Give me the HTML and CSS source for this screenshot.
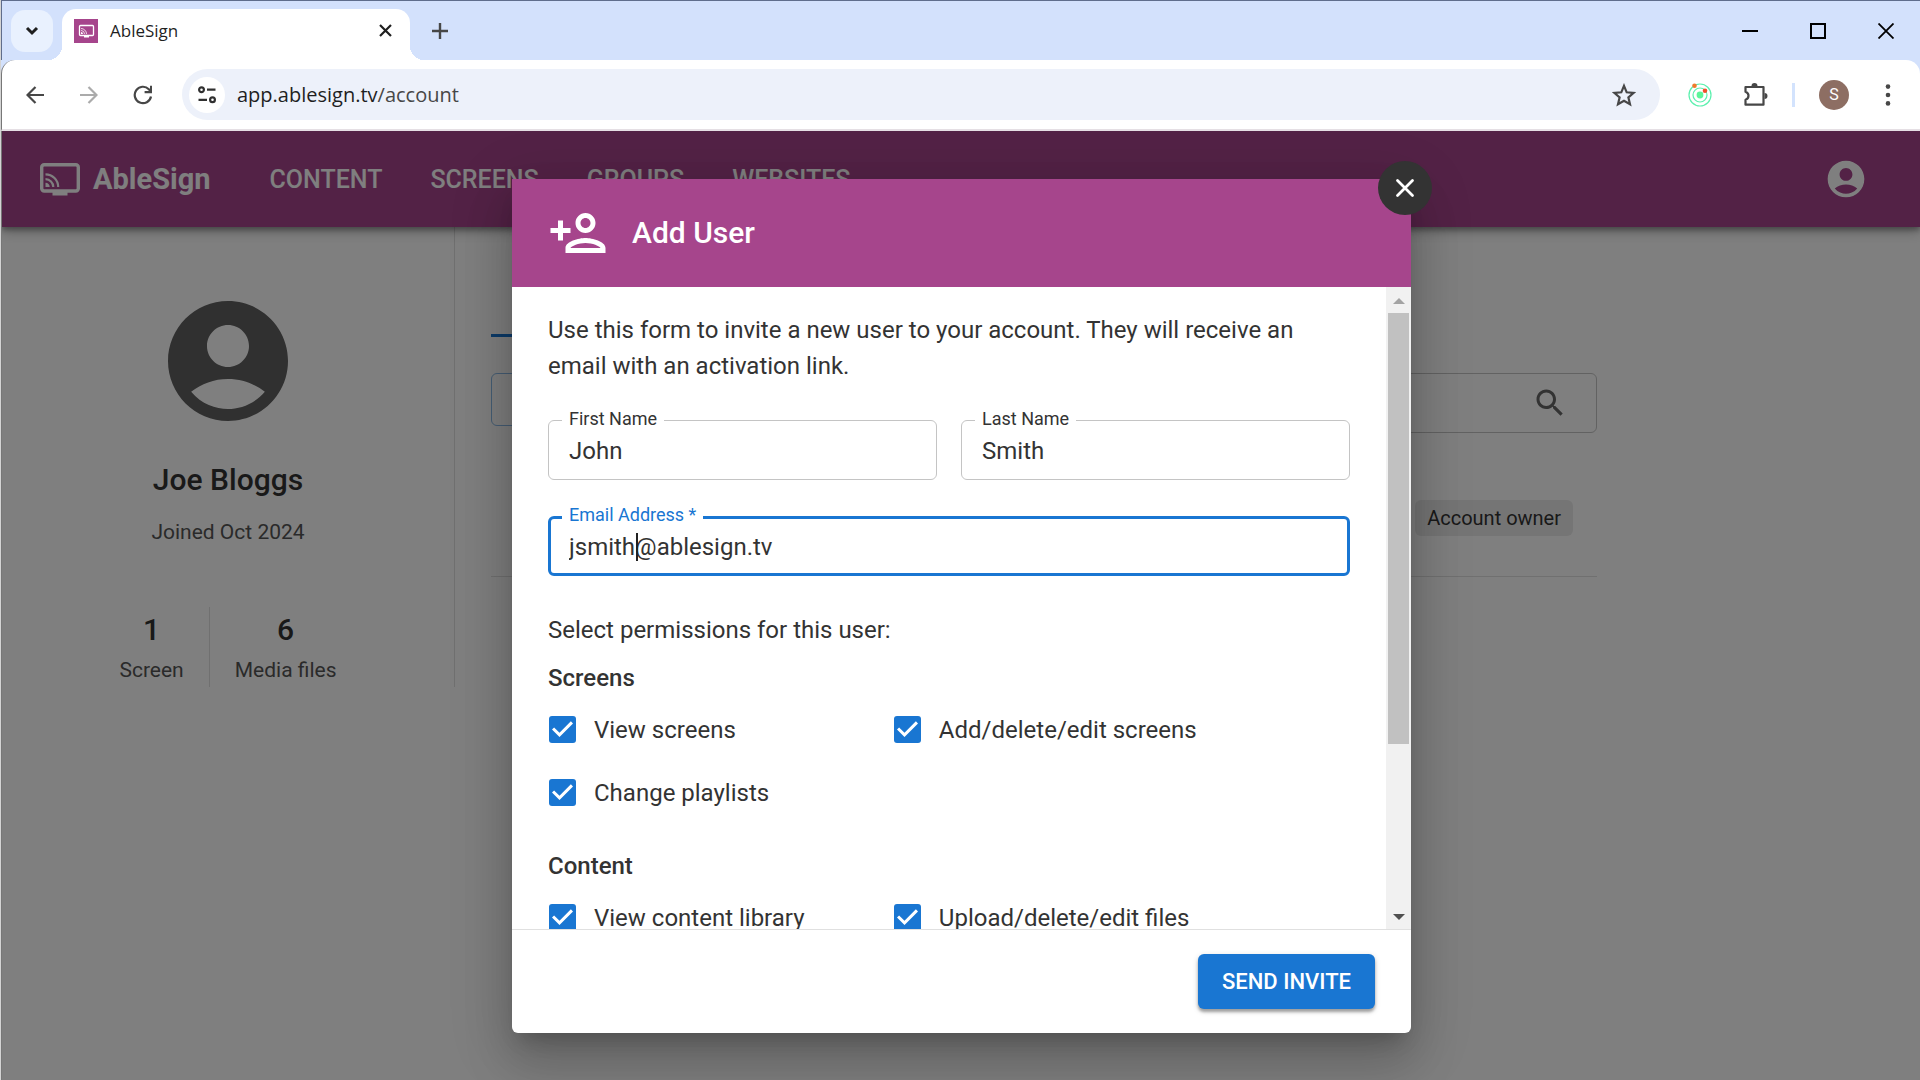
FILE: index.html
```html
<!DOCTYPE html>
<html lang="en">
<head>
    <meta charset="UTF-8">
    <title>AbleSign</title>
    <link rel="stylesheet" href="styles.css">
</head>
<body>
    <div class="window">
        <div class="tab-strip">
            <button class="tab-search" aria-label="Search tabs">
                <svg width="14" height="10" viewBox="0 0 14 10"><path d="M2 2l5 5 5-5" fill="none" stroke="#1f1f1f" stroke-width="3"/></svg>
            </button>
            <div class="tab">
                <svg class="favicon" width="24" height="24" viewBox="0 0 24 24">
                    <rect width="24" height="24" fill="#a6458c"/>
                    <rect x="5.500" y="6.500" width="14" height="10" rx="1" fill="none" stroke="#fff" stroke-width="1.300"/>
                    <path d="M10 17h5v1.500h-5zM7 15v-2a2 2 0 0 1 2 2z" fill="#fff"/>
                    <path d="M7 11.500a3.500 3.500 0 0 1 3.500 3.500M7 9.500a5.500 5.500 0 0 1 5.500 5.500" fill="none" stroke="#fff" stroke-width=".8"/>
                </svg>
                <span class="tab-title">AbleSign</span>
                <button class="tab-close" aria-label="Close tab">
                    <svg width="13" height="13" viewBox="0 0 13 13"><path d="M1 1l11 11M12 1L1 12" stroke="#1f1f1f" stroke-width="2.200"/></svg>
                </button>
            </div>
            <button class="new-tab" aria-label="New tab">
                <svg width="16" height="16" viewBox="0 0 16 16"><path d="M8 0v16M0 8h16" stroke="#474747" stroke-width="2.400"/></svg>
            </button>
            <div class="window-controls">
                <button aria-label="Minimize"><svg width="16" height="16" viewBox="0 0 16 16"><path d="M0 8h16" stroke="#000" stroke-width="2"/></svg></button>
                <button aria-label="Maximize"><svg width="16" height="16" viewBox="0 0 16 16"><path d="M1 1h14v14H1z" fill="none" stroke="#000" stroke-width="2"/></svg></button>
                <button aria-label="Close"><svg width="16" height="16" viewBox="0 0 16 16"><path d="M.5.5l15 15M15.500.5L.5 15.500" stroke="#000" stroke-width="1.800"/></svg></button>
            </div>
        </div>

        <div class="toolbar">
            <div class="nav-buttons">
                <button aria-label="Back"><svg width="18" height="18" viewBox="0 0 18 18"><path d="M18 9H1.500M9.500 1L1.500 9l8 8" fill="none" stroke="#474747" stroke-width="2.200"/></svg></button>
                <button aria-label="Forward"><svg width="18" height="18" viewBox="0 0 18 18"><path d="M0 9h16.500M8.500 1l8 8-8 8" fill="none" stroke="#ababab" stroke-width="2.200"/></svg></button>
                <button aria-label="Reload"><svg width="20" height="20" viewBox="0 0 20 20"><path d="M18 11.500A8.200 8.200 0 1 1 15.800 4.200L18 6.600" fill="none" stroke="#474747" stroke-width="2.200"/><path d="M19 .8v7.400h-7.400V6H17V.8z" fill="#474747"/></svg></button>
            </div>
            <div class="url-bar">
                <span class="site-info">
                    <svg width="20" height="18" viewBox="0 0 20 18"><g fill="none" stroke="#303030" stroke-width="2.200"><circle cx="4.500" cy="3.700" r="2.400"/><circle cx="15.500" cy="13.800" r="2.400"/><path d="M10 3.700h8.500M1.500 13.800H10"/></g></svg>
                </span>
                <span class="url">app.ablesign.tv<span class="url-path">/account</span></span>
                <button class="star" aria-label="Bookmark this tab">
                    <svg width="24" height="24" viewBox="0 0 24 24"><path d="M12 2.800l2.700 6.500 7 .6-5.300 4.600 1.600 6.800-6-3.600-6 3.600 1.600-6.800-5.300-4.600 7-.6z" fill="none" stroke="#474747" stroke-width="2.200"/></svg>
                </button>
            </div>
            <div class="extensions">
                <button aria-label="Extension">
                    <svg width="24" height="24" viewBox="0 0 24 24"><g fill="none" stroke="#5cf0ae" stroke-width="1.200"><circle cx="12" cy="12" r="11"/><circle cx="12" cy="12" r="7"/></g><circle cx="12" cy="12" r="3.400" fill="#5df59a"/><circle cx="6.500" cy="2.800" r="2.300" fill="#f07a2c"/><circle cx="17" cy="7.800" r="2.300" fill="#f0502c"/></svg>
                </button>
                <button aria-label="Extensions">
                    <svg width="26" height="26" viewBox="0 0 26 26"><path d="M3.500 5h18v17.700h-18v-5c4-1.200 4-6.600 0-8z" fill="none" stroke="#474747" stroke-width="2.200" stroke-linejoin="round"/><path d="M9.500 4a3 3 0 0 1 6 0zM22.500 11a3 3 0 0 1 0 6z" fill="#474747"/></svg>
                </button>
                <span class="separator"></span>
                <button class="profile-button">S</button>
                <button aria-label="Menu">
                    <svg width="6" height="22" viewBox="0 0 6 22"><g fill="#474747"><circle cx="3" cy="2.600" r="2.300"/><circle cx="3" cy="11" r="2.300"/><circle cx="3" cy="19.400" r="2.300"/></g></svg>
                </button>
            </div>
        </div>

        <div class="page">
            <header class="app-bar">
                <a class="brand" href="#">
                    <svg width="40" height="33" viewBox="0 0 40 33">
                        <rect x="1.700" y="1.700" width="36.600" height="26.300" rx="2.500" fill="none" stroke="#fff" stroke-width="3.400"/>
                        <path d="M12.500 28h15v4.500h-15zM5.500 24v-4.200a4.200 4.200 0 0 1 4.200 4.200z" fill="#fff"/>
                        <path d="M5.500 16.200a7.800 7.800 0 0 1 7.800 7.800M5.500 11.300A12.700 12.700 0 0 1 18.200 24" fill="none" stroke="#fff" stroke-width="2.200"/>
                    </svg>
                    <span>AbleSign</span>
                </a>
                <nav class="app-nav">
                    <a href="#">CONTENT</a>
                    <a href="#">SCREENS</a>
                    <a href="#">GROUPS</a>
                    <a href="#">WEBSITES</a>
                </nav>
                <button class="account" aria-label="Account">
                    <svg width="44" height="44" viewBox="0 0 24 24"><path fill="#fff" d="M12 2C6.480 2 2 6.480 2 12s4.480 10 10 10 10-4.480 10-10S17.520 2 12 2zm0 4c1.930 0 3.500 1.570 3.500 3.500S13.930 13 12 13s-3.500-1.570-3.500-3.500S10.070 6 12 6zm0 14c-2.030 0-4.430-.82-6.140-2.880C7.550 15.800 9.680 15 12 15s4.450.8 6.140 2.120C16.430 19.180 14.030 20 12 20z"/></svg>
                </button>
            </header>

            <main class="content">
                <section class="profile">
                    <svg width="144" height="144" viewBox="0 0 24 24"><path fill="#606060" d="M12 2C6.480 2 2 6.480 2 12s4.480 10 10 10 10-4.480 10-10S17.520 2 12 2zm0 4c1.930 0 3.500 1.570 3.500 3.500S13.930 13 12 13s-3.500-1.570-3.500-3.500S10.070 6 12 6zm0 14c-2.030 0-4.430-.82-6.140-2.880C7.550 15.800 9.680 15 12 15s4.450.8 6.140 2.120C16.430 19.180 14.030 20 12 20z"/></svg>
                    <h1>Joe Bloggs</h1>
                    <p class="joined">Joined Oct 2024</p>
                    <div class="stats">
                        <div class="stat"><b>1</b><span>Screen</span></div>
                        <div class="stat"><b>6</b><span>Media files</span></div>
                    </div>
                </section>
                <section class="users">
                    <div class="users-tabs"></div>
                    <div class="users-tools">
                        <button class="add-user" aria-label="Add user"></button>
                        <div class="search">
                            <input type="text" aria-label="Search users">
                            <svg width="36" height="36" viewBox="0 0 24 24"><path fill="#666" d="M15.500 14h-.79l-.28-.27C15.410 12.590 16 11.110 16 9.500 16 5.910 13.090 3 9.500 3S3 5.910 3 9.500 5.910 16 9.500 16c1.610 0 3.090-.59 4.230-1.570l.27.28v.79l5 4.990L20.490 19l-4.990-5zm-6 0C7.010 14 5 11.990 5 9.500S7.010 5 9.500 5 14 7.010 14 9.500 11.990 14 9.500 14z"/></svg>
                        </div>
                    </div>
                    <div class="user-row"><span class="chip">Account owner</span></div>
                </section>
            </main>

            <div class="backdrop">
                <form class="dialog" role="dialog" aria-labelledby="dialog-title">
                    <header class="dialog-header">
                        <svg width="60" height="60" viewBox="0 0 24 24"><path fill="#fff" d="M15 12c2.210 0 4-1.790 4-4s-1.790-4-4-4-4 1.790-4 4 1.790 4 4 4zm0-6c1.100 0 2 .9 2 2s-.9 2-2 2-2-.9-2-2 .9-2 2-2zm0 8c-2.670 0-8 1.340-8 4v2h16v-2c0-2.660-5.330-4-8-4zm-6 4c.22-.72 3.310-2 6-2 2.700 0 5.800 1.290 6 2H9zm-3-3v-3h3v-2H6V7H4v3H1v2h3v3z"/></svg>
                        <h2 id="dialog-title">Add User</h2>
                    </header>
                    <button type="button" class="dialog-close" aria-label="Close dialog">
                        <svg width="20" height="20" viewBox="0 0 20 20"><path d="M2.500 2.500l15 15M17.500 2.500l-15 15" stroke="#fff" stroke-width="2.800" stroke-linecap="round"/></svg>
                    </button>

                    <div class="dialog-body">
                        <div class="dialog-content">
                            <p>Use this form to invite a new user to your account. They will receive an email with an activation link.</p>
                            <div class="fields">
                                <div class="field">
                                    <label for="first-name">First Name</label>
                                    <input id="first-name" type="text" value="John">
                                </div>
                                <div class="field">
                                    <label for="last-name">Last Name</label>
                                    <input id="last-name" type="text" value="Smith">
                                </div>
                                <div class="field field-wide focused">
                                    <label for="email">Email Address *</label>
                                    <input id="email" type="email" value="jsmith@ablesign.tv">
                                    <span class="caret"></span>
                                </div>
                            </div>
                            <p>Select permissions for this user:</p>

                            <h3>Screens</h3>
                            <div class="permissions">
                                <label><input type="checkbox" checked>View screens</label>
                                <label><input type="checkbox" checked>Add/delete/edit screens</label>
                                <label><input type="checkbox" checked>Change playlists</label>
                            </div>

                            <h3>Content</h3>
                            <div class="permissions">
                                <label><input type="checkbox" checked>View content library</label>
                                <label><input type="checkbox" checked>Upload/delete/edit files</label>
                            </div>
                        </div>
                        <div class="scrollbar">
                            <span class="arrow arrow-up"></span>
                            <div class="track"><div class="thumb"></div></div>
                            <span class="arrow arrow-down"></span>
                        </div>
                    </div>

                    <footer class="dialog-footer">
                        <button type="button" class="send">SEND INVITE</button>
                    </footer>
                </form>
            </div>
        </div>
    </div>
</body>
</html>
```

FILE: styles.css
```css
* {
    box-sizing: border-box;
}

body {
    margin: 0;
    font-family: Roboto, "Liberation Sans", sans-serif;
    font-size: 24px;
    color: #333;
}

h1, h2, h3, p {
    margin: 0;
}

a {
    color: inherit;
    text-decoration: none;
}

button {
    display: flex;
    align-items: center;
    justify-content: center;
    padding: 0;
    border: 0;
    background: none;
    font-family: inherit;
}

svg {
    display: block;
    flex: none;
}

.window {
    display: flex;
    flex-direction: column;
    height: 100vh;
    border-left: 1px solid #d4d4d4;
    background: #d3e1fc;
}

/* browser frame */
.tab-strip {
    display: flex;
    align-items: center;
    height: 60px;
    flex: none;
    padding-left: 9px;
    border-top: 1px solid #5f6d8c;
    border-left: 1px solid #5f6d8c;
}

.tab-search {
    width: 42px;
    height: 42px;
    border-radius: 14px;
    background: #e9f1fe;
}

.tab {
    position: relative;
    display: flex;
    align-items: center;
    align-self: flex-end;
    width: 348px;
    height: 51px;
    margin-left: 9px;
    padding: 0 18px 8px 12px;
    border-radius: 14px 14px 0 0;
    background: #fff;
}

/* flared feet of the active tab */
.tab::before, .tab::after {
    content: "";
    position: absolute;
    bottom: 0;
    width: 14px;
    height: 14px;
}

.tab::before {
    right: 100%;
    background: radial-gradient(circle at 0 0, transparent 14px, #fff 14px);
}

.tab::after {
    left: 100%;
    background: radial-gradient(circle at 100% 0, transparent 14px, #fff 14px);
}

.tab-title {
    flex: 1;
    margin-left: 12px;
    font-family: "Open Sans", sans-serif;
    font-size: 17px;
    color: #1f1f1f;
}

.new-tab {
    width: 42px;
    height: 42px;
    margin-left: 9px;
}

.window-controls {
    display: flex;
    margin-left: auto;
}

.window-controls button {
    width: 68px;
    height: 58px;
}

.toolbar {
    display: flex;
    align-items: center;
    flex: none;
    height: 71px;
    padding: 0 29px 0 6px;
    border-left: 1px solid #777;
    border-bottom: 2px solid #e5dfe4;
    border-radius: 14px 14px 0 0;
    background: #fff;
}

.nav-buttons {
    display: flex;
    margin-right: 12px;
}

.nav-buttons button {
    width: 54px;
    height: 48px;
}

.url-bar {
    display: flex;
    align-items: center;
    flex: 1;
    height: 51px;
    padding: 0 24px 0 7px;
    border-radius: 26px;
    background: #edf1fa;
}

.site-info {
    display: flex;
    align-items: center;
    justify-content: center;
    width: 36px;
    height: 36px;
    border-radius: 50%;
    background: #fff;
}

.url {
    flex: 1;
    margin-left: 12px;
    font-family: "Open Sans", sans-serif;
    font-size: 20px;
    color: #1f1f1f;
}

.url-path {
    color: #474747;
}

.extensions {
    display: flex;
    align-items: center;
    gap: 24px;
    padding-left: 28px;
}

.extensions button:nth-child(2) {
    margin-left: 6px;
}

.extensions button:last-child {
    margin-left: 12px;
}

.separator {
    width: 3px;
    height: 24px;
    background: #d3e3fd;
}

.profile-button {
    width: 30px;
    height: 30px;
    border-radius: 50%;
    background: #8d6e63;
    color: #fff;
    font-size: 16px;
}

/* account page */
.page {
    position: relative;
    flex: 1;
    min-height: 0;
    overflow: hidden;
    border-left: 1px solid #777;
    background: #fff;
}

.app-bar {
    position: relative;
    display: flex;
    align-items: center;
    height: 96px;
    padding: 0 52px 0 38px;
    background: #a6458c;
    box-shadow: 0 3px 5px rgba(0, 0, 0, .3), 0 5px 12px rgba(0, 0, 0, .24);
    color: #fff;
}

.brand {
    display: flex;
    align-items: center;
    gap: 13px;
    font-size: 29px;
    font-weight: 700;
}

.app-nav {
    display: flex;
    gap: 48px;
    margin-left: 59px;
    font-size: 25px;
    font-weight: 500;
}

.account {
    margin-left: auto;
}

.content {
    display: flex;
    align-items: flex-start;
}

.profile {
    display: flex;
    flex-direction: column;
    align-items: center;
    width: 453px;
    padding-top: 62px;
    border-right: 1px solid #e0e0e0;
}

.profile h1 {
    margin-top: 24px;
    font-size: 30px;
    font-weight: 500;
    line-height: 46px;
}

.joined {
    margin-top: 14px;
    font-size: 21px;
    line-height: 30px;
    color: #555;
}

.stats {
    display: flex;
    margin-top: 60px;
}

.stat {
    display: flex;
    flex-direction: column;
    align-items: center;
    padding: 0 25px;
}

.stat + .stat {
    border-left: 1px solid #e0e0e0;
}

.stat b {
    font-size: 30px;
    font-weight: 500;
    line-height: 46px;
}

.stat span {
    font-size: 21px;
    line-height: 34px;
    color: #555;
}

.users {
    width: 1106px;
    margin-left: 36px;
    padding-top: 48px;
}

.users-tabs {
    width: 160px;
    height: 62px;
    border-bottom: 3px solid #1976d2;
}

.users-tools {
    display: flex;
    align-items: flex-start;
    gap: 24px;
    margin-top: 36px;
}

.add-user {
    width: 190px;
    height: 53px;
    border: 1px solid #8cbae8;
    border-radius: 6px;
}

.search {
    display: flex;
    align-items: center;
    flex: 1;
    height: 60px;
    padding: 0 28px 0 20px;
    border: 1px solid #c4c4c4;
    border-radius: 6px;
}

.search input {
    flex: 1;
    border: 0;
    background: none;
    font: inherit;
}

.user-row {
    display: flex;
    justify-content: flex-end;
    margin-top: 28px;
    padding: 39px 24px 40px;
    border-bottom: 1px solid #e0e0e0;
}

.chip {
    padding: 0 12px;
    border-radius: 6px;
    background: #ebebeb;
    font-size: 20px;
    line-height: 36px;
}

/* add user dialog */
.backdrop {
    position: absolute;
    inset: 0;
    display: flex;
    justify-content: center;
    padding: 48px 47px 47px 48px;
    background: rgba(0, 0, 0, .5);
}

.dialog {
    position: relative;
    display: flex;
    flex-direction: column;
    width: 100%;
    max-width: 899px;
    border-radius: 6px;
    background: #fff;
    box-shadow: 0 14px 19px -9px rgba(0, 0, 0, .2), 0 30px 48px 4px rgba(0, 0, 0, .14), 0 12px 58px 10px rgba(0, 0, 0, .12);
}

.dialog-header {
    display: flex;
    align-items: center;
    gap: 24px;
    padding: 24px 36px;
    background: #a6458c;
    color: #fff;
}

.dialog-header h2 {
    font-size: 30px;
    font-weight: 500;
    line-height: 36px;
}

.dialog-close {
    position: absolute;
    top: -18px;
    right: -21px;
    width: 54px;
    height: 54px;
    border-radius: 50%;
    background: #333;
}

.dialog-body {
    display: flex;
    flex: 1;
    min-height: 0;
}

.dialog-content {
    flex: 1;
    padding: 25px 36px;
    overflow-y: auto;
    scrollbar-width: none;
    line-height: 36px;
}

.fields {
    display: grid;
    grid-template-columns: 1fr 1fr;
    gap: 36px 24px;
    margin: 36px 0;
}

.field {
    position: relative;
}

.field-wide {
    grid-column: span 2;
}

.field input {
    display: block;
    width: 100%;
    height: 60px;
    padding: 2px 20px 0;
    border: 1px solid #c4c4c4;
    border-radius: 6px;
    outline: 0;
    background: #fff;
    color: #333;
    font: inherit;
}

.field label {
    position: absolute;
    top: -11px;
    left: 14px;
    padding: 0 7px;
    background: #fff;
    font-size: 18px;
    line-height: 20px;
}

.focused input {
    padding: 2px 18px 0;
    border: 3px solid #1976d2;
}

.focused label {
    color: #1976d2;
}

.caret {
    position: absolute;
    top: 17px;
    left: 88px;
    width: 2px;
    height: 28px;
    background: #222;
}

.dialog-content h3 {
    margin-top: 12px;
    font-size: 24px;
    font-weight: 500;
}

.permissions {
    display: grid;
    grid-template-columns: 43% 57%;
    margin: 2px 0 24px;
}

.permissions label {
    display: flex;
    align-items: center;
    gap: 18px;
    height: 63px;
}

.permissions input {
    appearance: none;
    width: 27px;
    height: 27px;
    margin: 0 0 0 1px;
    border-radius: 3px;
    background: #1976d2 url("data:image/svg+xml,%3Csvg xmlns='http://www.w3.org/2000/svg' viewBox='0 0 18 18'%3E%3Cpath fill='%23fff' d='M7 14L2 9l1.410-1.410L7 11.170l7.590-7.590L16 5z'/%3E%3C/svg%3E");
}

.scrollbar {
    display: flex;
    flex-direction: column;
    width: 25px;
    padding: 1px 2px 0;
    background: #f1f1f1;
}

.track {
    flex: 1;
}

.thumb {
    height: 73%;
    background: #c1c1c1;
}

.arrow {
    display: flex;
    align-items: center;
    justify-content: center;
    height: 25px;
}

.arrow::before {
    content: "";
    border: 6px solid transparent;
}

.arrow-up::before {
    border-top: 0;
    border-bottom-color: #a3a3a3;
}

.arrow-down::before {
    border-bottom: 0;
    border-top-color: #505050;
}

.dialog-footer {
    display: flex;
    justify-content: flex-end;
    padding: 24px 36px;
    border-top: 1px solid #e0e0e0;
}

.send {
    height: 55px;
    padding: 0 24px;
    border-radius: 6px;
    background: #1976d2;
    box-shadow: 0 3px 3px rgba(0, 0, 0, .3), 0 2px 6px rgba(0, 0, 0, .16);
    color: #fff;
    font-size: 22px;
    font-weight: 500;
}
```
